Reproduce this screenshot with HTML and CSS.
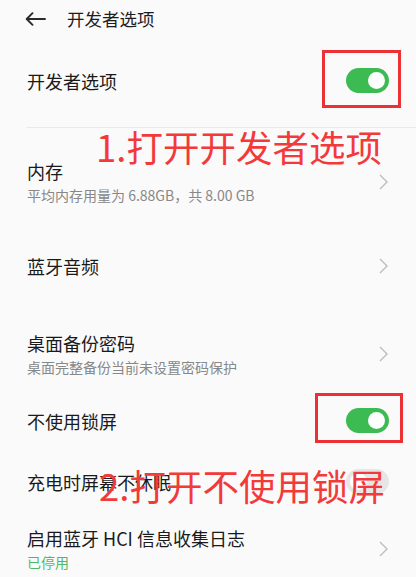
FILE: index.html
```html
<!DOCTYPE html>
<html lang="zh-CN">
<head>
<meta charset="utf-8">
<link rel="stylesheet" href="styles.css">
</head>
<body>
<div class="screen">
  <header class="topbar">
    <svg class="back" width="21" height="14" viewBox="0 0 21 14"><path d="M20 7H2M7.5 1.2L1.7 7l5.8 5.8" fill="none" stroke="#2a2a2a" stroke-width="1.9" stroke-linecap="round" stroke-linejoin="round"/></svg>
    <span class="topbar-title">开发者选项</span>
  </header>

  <div class="row row-main">
    <div class="line"><span class="title">开发者选项</span><span class="switch on"></span></div>
  </div>

  <div class="row row-mem">
    <div class="line">
      <div class="texts"><span class="title">内存</span><span class="sub">平均内存用量为 6.88GB，共 8.00 GB</span></div>
      <svg class="chev" width="9" height="16" viewBox="0 0 9 16"><path d="M1 1l7 7-7 7" fill="none" stroke="#bdbdbd" stroke-width="1.4"/></svg>
    </div>
  </div>

  <div class="row row-bt">
    <div class="line">
      <span class="title">蓝牙音频</span>
      <svg class="chev" width="9" height="16" viewBox="0 0 9 16"><path d="M1 1l7 7-7 7" fill="none" stroke="#bdbdbd" stroke-width="1.4"/></svg>
    </div>
  </div>

  <div class="row row-backup">
    <div class="line">
      <div class="texts"><span class="title">桌面备份密码</span><span class="sub">桌面完整备份当前未设置密码保护</span></div>
      <svg class="chev" width="9" height="16" viewBox="0 0 9 16"><path d="M1 1l7 7-7 7" fill="none" stroke="#bdbdbd" stroke-width="1.4"/></svg>
    </div>
  </div>

  <div class="row row-lock">
    <div class="line"><span class="title">不使用锁屏</span><span class="switch on"></span></div>
  </div>

  <div class="row row-charge">
    <div class="line"><span class="title">充电时屏幕不休眠</span><span class="switch off"></span></div>
  </div>

  <div class="row row-hci">
    <div class="line">
      <div class="texts"><span class="title">启用蓝牙 HCI 信息收集日志</span><span class="sub green">已停用</span></div>
      <svg class="chev" width="9" height="16" viewBox="0 0 9 16"><path d="M1 1l7 7-7 7" fill="none" stroke="#bdbdbd" stroke-width="1.4"/></svg>
    </div>
  </div>

  <div class="mark box1"></div>
  <div class="mark box2"></div>
  <div class="note note1">1.打开开发者选项</div>
  <div class="note note2">2.打开不使用锁屏</div>
</div>
</body>
</html>
```

FILE: styles.css
```css
* { box-sizing: border-box; }
html, body { margin: 0; padding: 0; }
body {
  background: #fafafa;
  font-family: "Noto Sans CJK SC", "Noto Sans", sans-serif;
  color: #222;
}
.screen {
  position: relative;
  width: 416px;
  height: 577px;
  overflow: hidden;
  background: #fafafa;
}
.topbar {
  height: 38px;
  display: flex;
  align-items: center;
  padding-left: 25px;
}
.back { display: block; margin-right: 21px; }
.topbar-title { font-size: 17.5px; line-height: 24px; color: #1e1e1e; }

.row { padding: 0 27px; }
.line {
  display: flex;
  align-items: center;
  justify-content: space-between;
}
.texts { display: flex; flex-direction: column; }
.title { font-size: 18px; line-height: 24px; color: #1a1a1a; }
.sub { font-size: 14px; line-height: 18px; color: #888; margin-top: 3px; }
.sub.green { color: #4cbb68; }
.chev { display: block; margin-right: 1px; }

.row-main { padding-top: 30px; height: 90px; }
.row-main::after {
  content: "";
  display: block;
  height: 1px;
  background: #e9e9e9;
  margin-top: 34px;
  margin-right: -27px;
}
.row-mem { padding-top: 31px; height: 126px; }
.row-bt { padding-top: 0; height: 77px; }
.row-backup { padding-top: 0; height: 77px; }
.row-lock { padding-top: 0; height: 61px; }
.row-charge { padding-top: 0; height: 57px; }
.row-hci { padding-top: 0; }

.switch {
  display: block;
  width: 43px;
  height: 25px;
  border-radius: 13px;
  position: relative;
}
.switch.on { background: #3dbb53; }
.switch.off { background: #e6e6e6; }
.switch::after {
  content: "";
  position: absolute;
  top: 4px;
  width: 17px;
  height: 17px;
  border-radius: 50%;
  background: #fff;
}
.switch.on::after { right: 4px; }
.switch.off::after { left: 4px; }

.mark {
  position: absolute;
  border: 3px solid #ec3134;
}
.box1 { left: 322px; top: 50px; width: 79px; height: 58px; }
.box2 { left: 315px; top: 393px; width: 88px; height: 50px; }

.note {
  position: absolute;
  color: #f23a3a;
  font-size: 36.5px;
  line-height: 40px;
  white-space: nowrap;
}
.note1 { left: 96px; top: 127px; }
.note2 { left: 99px; top: 466px; }
```
